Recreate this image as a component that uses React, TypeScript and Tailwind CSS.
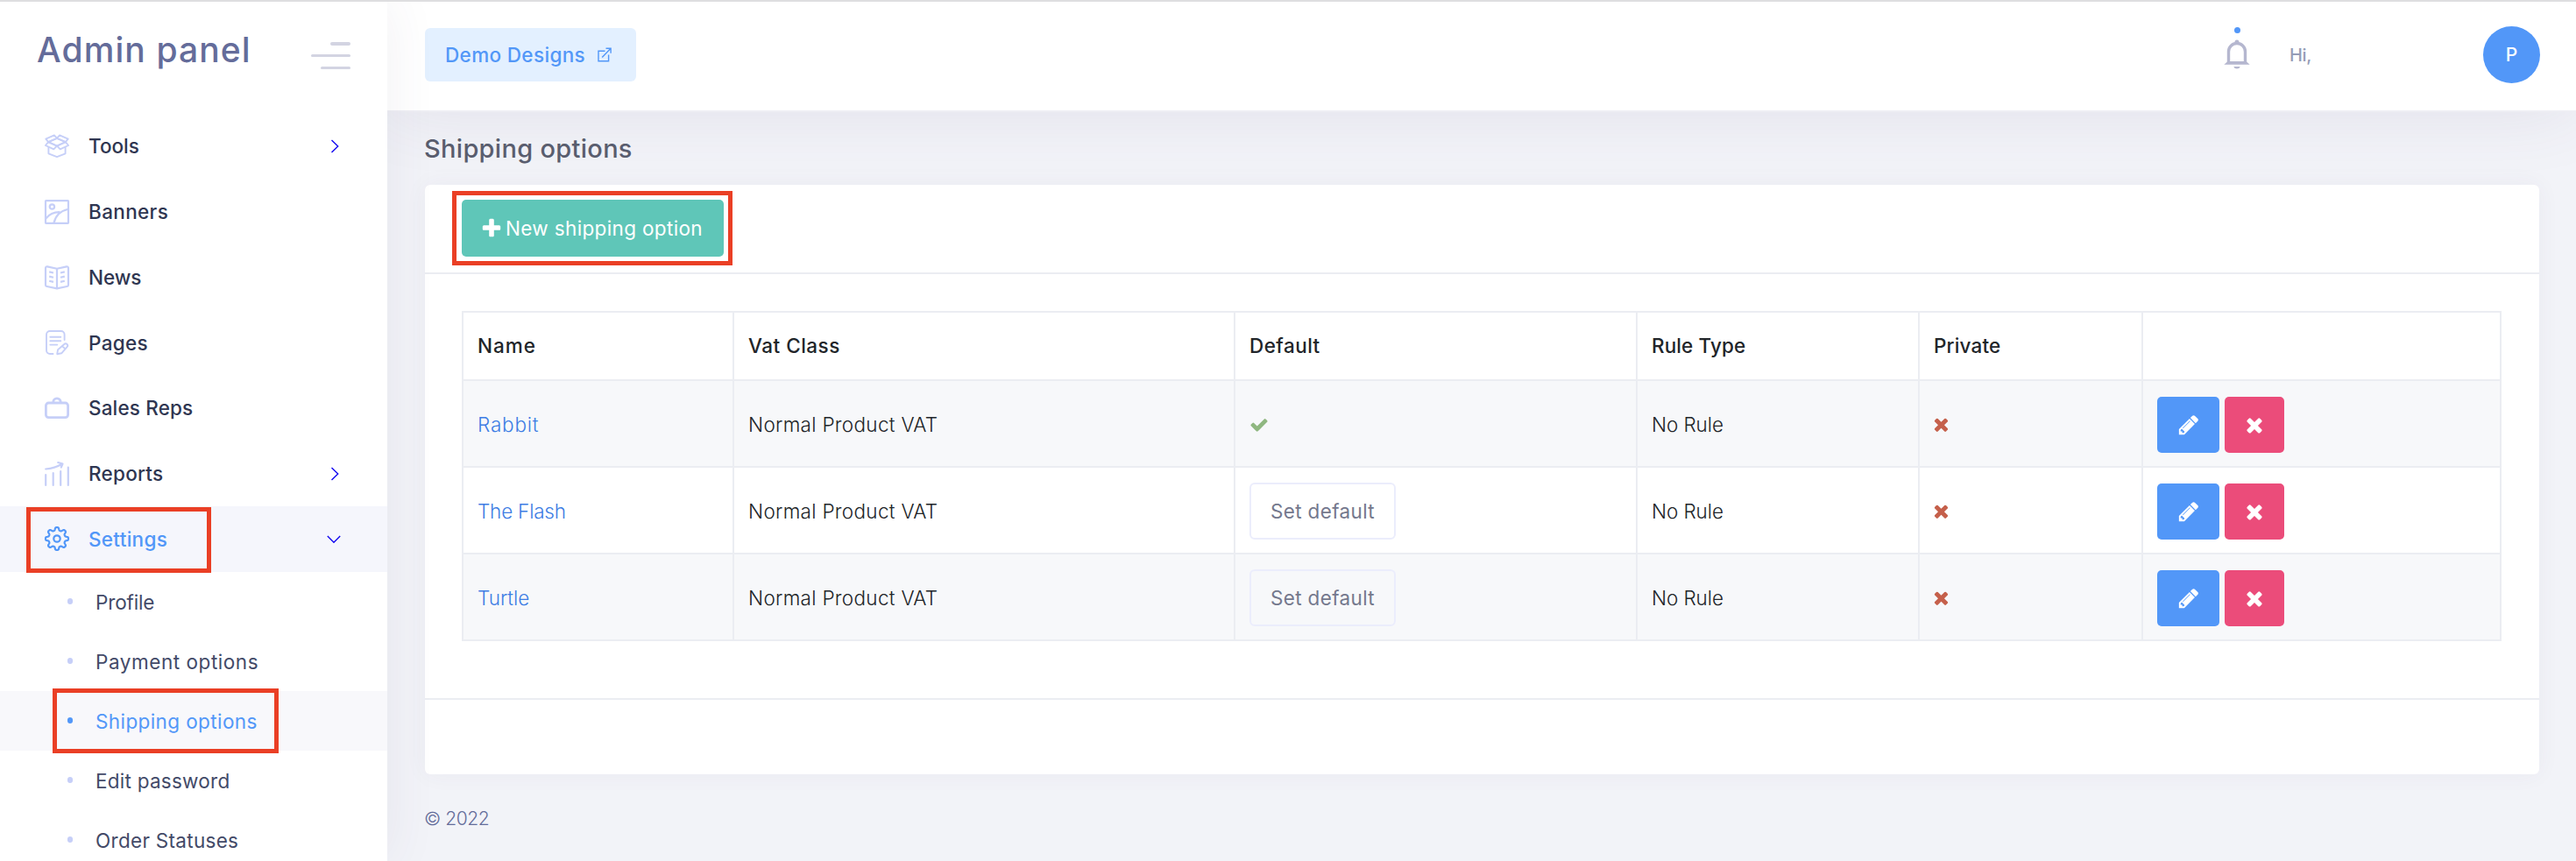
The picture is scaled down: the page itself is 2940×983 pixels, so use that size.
import React from 'react';

const faPaths = {
  pencil: 'M491 1536l91-91-235-235-91 91v107h128v128h107zM1014 608q0-22-22-22-10 0-17 7l-542 542q-7 7-7 17 0 22 22 22 10 0 17-7l542-542q7-7 7-17zM960 416l416 416-832 832h-416v-416zM1643 512q0 53-37 90l-166 166-416-416 166-165q36-38 90-38 53 0 91 38l235 234q37 39 37 91z',
  times: 'M1490 1322q0 40-28 68l-136 136q-28 28-68 28t-68-28l-294-294-294 294q-28 28-68 28t-68-28l-136-136q-28-28-28-68t28-68l294-294-294-294q-28-28-28-68t28-68l136-136q28-28 68-28t68 28l294 294 294-294q28-28 68-28t68 28l136 136q28 28 28 68t-28 68l-294 294 294 294q28 28 28 68z',
  check: 'M1671 566q0 40-28 68l-724 724-136 136q-28 28-68 28t-68-28l-136-136-362-362q-28-28-28-68t28-68l136-136q28-28 68-28t68 28l294 295 656-657q28-28 68-28t68 28l136 136q28 28 28 68z',
  plus: 'M1600 736v192q0 40-28 68t-68 28h-416v416q0 40-28 68t-68 28h-192q-40 0-68-28t-28-68v-416h-416q-40 0-68-28t-28-68v-192q0-40 28-68t68-28h416v-416q0-40 28-68t68-28h192q40 0 68 28t28 68v416h416q40 0 68 28t28 68z',
};

function FaIcon({ name, className }: { name: keyof typeof faPaths; className?: string }) {
  return (
    <svg viewBox="0 0 1792 1792" fill="currentColor" className={className}>
      <path d={faPaths[name]} />
    </svg>
  );
}

// eight rounded teeth around the centre of a 28px box
const gearPath =
  Array.from({ length: 120 }, (_, i) => {
    const a = (i * 3 * Math.PI) / 180;
    const r = 11.3 + 1.75 * Math.tanh(2 * Math.cos(8 * a));
    return `${i ? 'L' : 'M'}${(14 + r * Math.sin(a)).toFixed(2)} ${(14 - r * Math.cos(a)).toFixed(2)}`;
  }).join('') + 'Z';

const icons: Record<string, React.ReactNode> = {
  tools: (
    <g strokeWidth="1.9">
      <path d="M4.2 9.2 1.3 5.6 10.9 1.4 14 4.8ZM23.8 9.2l2.9-3.6-9.6-4.2L14 4.8Z" />
      <path d="M4.2 9.2 14 5l9.8 4.2L14 13.6Z" />
      <path d="M4.2 9.2.9 13l9.4 4.4L14 13.6ZM23.8 9.2l3.3 3.8-9.4 4.4-3.7-3.8Z" />
      <path d="M4.4 15.4v6.9l9.6 3.8 9.6-3.8v-6.9" />
    </g>
  ),
  banners: (
    <g strokeWidth="2.2">
      <rect x="1" y="1.2" width="26" height="25.6" rx="0.5" />
      <circle cx="8.4" cy="8" r="2.7" />
      <path d="M1.3 21.5C5 17 10 14.3 16.5 14.2M27 10.8C19.5 12.5 12.5 17 10.4 26.8" />
    </g>
  ),
  news: (
    <g strokeWidth="2.2">
      <path d="M14 3.8 3 1.4Q1 1.3 1 3.2v19q0 1.5 1.5 1.8L14 26.4 25.500 24q1.500-.3 1.500-1.800v-19q0-1.900-2-1.800ZM14 3.800v22.600" />
      <path d="m5.200 7.400 4.800 1.100M5.200 12.600l4.800 1.100M5.200 17.800l4.800 1.100M22.800 7.400 18 8.500M22.800 12.600 18 13.700M22.800 17.800 18 18.900" strokeLinecap="butt" />
    </g>
  ),
  pages: (
    <g strokeWidth="1.9">
      <path d="M22.600 11V5a4 4 0 0 0-4-4H6a4 4 0 0 0-4 4v18a4 4 0 0 0 4 4h3.500M6.300 7.800h12M6.300 12.200h12M6.300 16.600h8" />
      <path d="m14.200 27.200.9-5 7.200-6.200a2.200 2.200 0 0 1 3.200 3.200l-6.300 7.100ZM20.500 18.500l2.200 2.200" />
    </g>
  ),
  sales: (
    <g strokeWidth="2.8">
      <rect x="1.4" y="8" width="25.2" height="16.6" rx="3" />
      <path d="M9.800 7.500V7a4.200 4.200 0 0 1 8.400 0v.5" />
    </g>
  ),
  reports: (
    <g strokeWidth="2.2">
      <path d="M1.200 15v12M9.700 13v14M18.200 11v16M26.800 6.500V27" />
      <path d="M1.200 8.500C8 7.800 14 6 20 2.700M15.200 1l5.300 1.500-1.700 4" />
    </g>
  ),
  settings: (
    <g strokeWidth="2.2">
      <path d={gearPath} />
      <circle cx="14" cy="14" r="3.7" />
    </g>
  ),
};

const menu = [
  { icon: 'tools', label: 'Tools', tracking: 'tracking-normal', arrow: 'right' },
  { icon: 'banners', label: 'Banners', tracking: 'tracking-[0.35px]' },
  { icon: 'news', label: 'News', tracking: 'tracking-[-0.1px]' },
  { icon: 'pages', label: 'Pages', tracking: 'tracking-[0.3px]' },
  { icon: 'sales', label: 'Sales Reps', tracking: 'tracking-[0.15px]' },
  { icon: 'reports', label: 'Reports', tracking: 'tracking-[0.25px]', arrow: 'right' },
  { icon: 'settings', label: 'Settings', tracking: 'tracking-[0.3px]', arrow: 'down', active: true },
];

const submenu = [
  { label: 'Profile', tracking: 'tracking-[-0.15px]' },
  { label: 'Payment options', tracking: 'tracking-[0.55px]' },
  { label: 'Shipping options', tracking: 'tracking-[0.4px]', active: true },
  { label: 'Edit password', tracking: 'tracking-[0.25px]' },
  { label: 'Order Statuses', tracking: 'tracking-[0.3px]' },
];

const columns = [
  { label: 'Name', className: 'w-[309px] tracking-[1px]' },
  { label: 'Vat Class', className: 'w-[572px] tracking-[0.5px]' },
  { label: 'Default', className: 'w-[459px] tracking-[0.45px]' },
  { label: 'Rule Type', className: 'w-[322px] tracking-[0.1px]' },
  { label: 'Private', className: 'w-[255px] tracking-[0.15px]' },
  { label: '', className: 'w-[409px]' },
];

const options = [
  { name: 'Rabbit', tracking: 'tracking-[0.8px]', isDefault: true },
  { name: 'The Flash', tracking: 'tracking-[-0.2px]', isDefault: false },
  { name: 'Turtle', tracking: 'tracking-normal', isDefault: false },
];

// red rectangle drawn over the element it points at
function Highlight({ className }: { className: string }) {
  return <div className={`pointer-events-none absolute z-30 border-[5px] border-[#ea3f25] ${className}`} />;
}

function Chevron({ direction }: { direction: string }) {
  return (
    <svg viewBox="0 0 16 16" fill="none" stroke="#1208f0" strokeWidth="1.4" className={direction === 'down' ? 'mr-[53px] h-4 w-4' : 'mr-[52px] h-4 w-4'}>
      <path d={direction === 'down' ? 'M.8 5 8 12.2 15.200 5' : 'm4.500 1 7.200 7-7.200 7'} />
    </svg>
  );
}

function Sidebar() {
  return (
    <aside className="relative z-20 w-[442px] shrink-0 bg-white shadow-[0_0_56px_rgba(82,63,105,0.08)]">
      <div className="flex h-[128px] justify-between pr-[42px] pl-[42px]">
        <div className="pt-[30px] text-[39px] leading-[50px] font-medium tracking-[1.1px] text-[#646c9a]">Admin panel</div>
        <div className="flex flex-col items-end pt-[46px]">
          <span className="h-1 w-[23px] rounded-full bg-[#d3d4e2]" />
          <span className="mt-[10px] h-[3px] w-[45px] rounded-full bg-[#d3d4e2]" />
          <span className="mt-[11px] h-[3px] w-[34px] rounded-full bg-[#d3d4e2]" />
        </div>
      </div>
      <nav className="relative">
        {menu.map((item) => (
          <a key={item.label} href="#" className={`flex h-[74.7px] items-center pl-[51px] ${item.active ? 'bg-[#f5f6fc] text-[#5297f8]' : 'text-[#2f3651]'}`}>
            <svg viewBox="0 0 28 28" fill="none" stroke="currentColor" strokeLinecap="round" strokeLinejoin="round" className={`h-7 w-7 shrink-0 overflow-visible ${item.active ? '' : 'text-[#c6cff8]'}`}>
              {icons[item.icon]}
            </svg>
            <span className={`ml-[22px] flex-1 text-[22.5px] font-medium ${item.tracking}`}>{item.label}</span>
            {item.arrow && <Chevron direction={item.arrow} />}
          </a>
        ))}
        <Highlight className="top-[449px] left-[30px] h-[75px] w-[211px]" />
        {submenu.map((item) => (
          <a key={item.label} href="#" className={`flex h-[68px] items-center pl-[77px] text-[22.5px] ${item.active ? 'bg-[#f8f8fb] text-[#5297f8]' : 'text-[#434a68]'}`}>
            <span className={`h-[7px] w-[6px] rounded-full ${item.active ? 'bg-[#5297f8]' : 'bg-[#c6cff8]'}`} />
            <span className={`ml-[26px] pt-0.5 ${item.tracking}`}>{item.label}</span>
          </a>
        ))}
        <Highlight className="top-[656px] left-[60px] h-[74px] w-[258px]" />
      </nav>
    </aside>
  );
}

function Header() {
  return (
    <header className="flex h-[126px] items-center justify-between border-b-2 border-[#eeeef4] bg-white pr-[41px] pb-[3px] pl-[43px] shadow-[0_0_80px_rgba(82,63,105,0.1)]">
      <a href="#" className="flex h-[61px] w-[241px] items-center rounded-md bg-[#e3f0ff] pl-[23px] text-[22.5px] font-medium tracking-[0.35px] text-[#5297f8]">
        Demo Designs
        <svg viewBox="0 0 16 17" fill="none" stroke="currentColor" strokeWidth="1.4" className="ml-3.5 h-[17px] w-4">
          <path d="M8.500 4.200H1v11.600h11.600V8.500M5.200 11.500 14.800 1.500M9.500 1.200h5.600v5.600" />
        </svg>
      </a>
      <div className="flex items-center">
        <div className="relative">
          <span className="absolute -top-[16px] left-3 h-[7px] w-[7px] rounded-full bg-[#5297f8]" />
          <svg viewBox="0 0 30 34" className="-mt-0.5 h-[34px] w-[30px]">
            <path d="M5.500 26V14a9.500 9.500 0 0 1 19 0v12" fill="none" stroke="#b5b7cf" strokeWidth="3.4" />
            <path d="M12.500 5V3a2.500 2.500 0 0 1 5 0v2ZM.3 28.800 4.500 25h21l4.200 3.800ZM11.300 31h7.400a3.800 3.300 0 0 1-7.400 0Z" fill="#b5b7cf" />
          </svg>
        </div>
        <span className="ml-[45px] w-[221px] text-[20px] font-medium tracking-[-0.4px] text-[#959cb6]">Hi,</span>
        <span className="flex h-[65px] w-[65px] items-center justify-center rounded-full bg-[#5297f8] text-[21px] font-medium text-white">P</span>
      </div>
    </header>
  );
}

function OptionsTable() {
  return (
    <table className="w-[2328px] table-fixed border-collapse text-left text-[22.5px] text-[#212529]">
      <thead>
        <tr className="h-[78px]">
          {columns.map((col, i) => (
            <th key={i} className={`border-2 border-[#ebedf2] px-4 py-0 font-medium ${col.className}`}>{col.label}</th>
          ))}
        </tr>
      </thead>
      <tbody>
        {options.map((option) => (
          <tr key={option.name} className="h-[99px] font-light odd:bg-[#f7f8fa] [&>td]:border-2 [&>td]:border-[#ebedf2] [&>td]:px-4 [&>td]:pt-0.5 [&>td]:pb-0">
            <td>
              <a href="#" className={`text-[#3d7de4] ${option.tracking}`}>{option.name}</a>
            </td>
            <td className="tracking-[0.3px]">Normal Product VAT</td>
            <td>
              {option.isDefault ? (
                <FaIcon name="check" className="h-[22px] w-[22px] text-[#8fb780]" />
              ) : (
                <button className="block h-[65px] w-[167px] rounded-md border-2 border-[#ebedfc] font-normal tracking-[0.35px] text-[#74788d]">Set default</button>
              )}
            </td>
            <td className="tracking-[-0.1px]">No Rule</td>
            <td>
              <FaIcon name="times" className="-ml-[3px] h-[23px] w-[23px] text-[#c5604b]" />
            </td>
            <td>
              <div className="flex gap-1.5">
                <button className="flex h-16 w-[71px] items-center justify-center rounded-[5px] bg-[#5297f8] text-white">
                  <FaIcon name="pencil" className="h-[26px] w-[26px]" />
                </button>
                <button className="flex h-16 w-[68px] items-center justify-center rounded-[5px] bg-[#eb4c7a] text-white">
                  <FaIcon name="times" className="h-[26px] w-[26px]" />
                </button>
              </div>
            </td>
          </tr>
        ))}
      </tbody>
    </table>
  );
}

export default function App() {
  return (
    <div className="h-[983px] w-full overflow-hidden border-t-2 border-[#dedee0] bg-[#f2f3f8] font-['Inter','Liberation_Sans',sans-serif]">
      <div className="flex h-full">
        <Sidebar />
        <div className="min-w-0 flex-1">
          <Header />
          <main className="px-[43px] pt-[25px]">
            <h1 className="-ml-px h-[58px] text-[29px] leading-[34px] font-medium tracking-[0.3px] text-[#595d6e]">Shipping options</h1>
            <section className="relative w-[2413px] rounded-md bg-white shadow-[0_0_26px_rgba(82,63,105,0.05)]">
              <div className="h-[102px] border-b-2 border-[#ebedf2] pt-[17px] pl-[42px]">
                <button className="flex h-[65px] w-[299px] items-center rounded-[5px] bg-[#5fc6b8] pl-[21px] text-[22.5px] tracking-[0.35px] text-white">
                  <FaIcon name="plus" className="mr-[3px] h-[26px] w-[26px]" />
                  New shipping option
                </button>
              </div>
              <Highlight className="top-[7px] left-[31px] h-[85px] w-[320px]" />
              <div className="h-[484px] pt-[42px] pl-[42px]">
                <OptionsTable />
              </div>
              <div className="h-[87px] border-t-2 border-[#ebedf2]" />
            </section>
            <footer className="-ml-px pt-9 text-[21px] leading-[30px] font-light tracking-[-0.4px] text-[#646c9a]">© 2022</footer>
          </main>
        </div>
      </div>
    </div>
  );
}
